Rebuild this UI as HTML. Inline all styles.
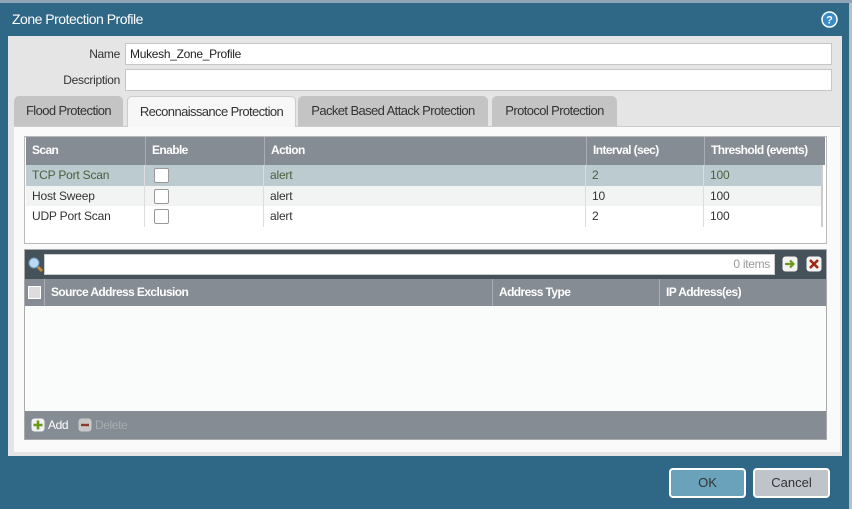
<!DOCTYPE html>
<html><head><style>
*{box-sizing:border-box;margin:0;padding:0}
body{width:852px;height:509px;background:#bdbdbd;font-family:"Liberation Sans",sans-serif;position:relative;overflow:hidden;font-size:12px}
.a{position:absolute}
.dlg{left:0;top:3px;width:849px;height:506px;background:#2f6787}
.title{left:12px;top:11px;color:#fff;font-size:14px;letter-spacing:-0.5px}
.panel{left:8px;top:36px;width:834px;height:420px;background:#e5e5e5}
.lbl{color:#333;font-size:12px;text-align:right;width:110px;left:10px;letter-spacing:-0.3px}
.inp{background:#fff;border:1px solid #c6c6c6;height:22px;left:125px;width:707px;padding:3px 4px;font-size:12px;color:#222;letter-spacing:-0.3px}
.tab{top:96px;height:30px;background:#c4c4c4;border-radius:5px 5px 0 0;font-size:13px;color:#333;text-align:center;line-height:30px;letter-spacing:-0.6px}
.tabp{left:14px;top:126px;width:826px;height:326px;background:#fafafa;border-top:1px solid #ccc}
.hdr{background:#858c93;color:#fff;font-weight:bold;font-size:12px}
.cell{top:0;height:100%;padding-left:6px;border-left:1px solid #a9aeb3;line-height:27px;letter-spacing:-0.6px}
.row{left:1px;width:797px;height:20px;line-height:20px;font-size:12px;color:#333;letter-spacing:-0.2px}
.cb{position:absolute;left:128px;top:3px;width:15px;height:15px;background:#fff;border:1px solid #999;border-radius:2px}
.btn{top:468px;width:77px;height:30px;border:2px solid #fff;border-radius:4px;text-align:center;line-height:26px;font-size:13px;color:#333}
</style></head><body>
<div class="a" style="left:0;top:0;width:852px;height:3px;background:#8fa5b5"></div>
<div class="a dlg"></div>
<div class="a title">Zone Protection Profile</div>
<svg class="a" style="left:821px;top:11px" width="17" height="17"><circle cx="8.5" cy="8.5" r="7.5" fill="#3a8cc8" stroke="#fff" stroke-width="1.5"/><text x="8.5" y="12.5" font-size="11" font-weight="bold" fill="#fff" text-anchor="middle" font-family="Liberation Sans">?</text></svg>
<div class="a panel"></div>
<div class="a lbl" style="top:47px">Name</div>
<div class="a inp" style="top:43px">Mukesh_Zone_Profile</div>
<div class="a lbl" style="top:73px">Description</div>
<div class="a inp" style="top:69px"></div>
<div class="a tab" style="left:14px;width:109px">Flood Protection</div>
<div class="a tab" style="left:127px;width:169px;background:#f7f7f7;border:1px solid #ccc;border-bottom:none;height:31px;z-index:2">Reconnaissance Protection</div>
<div class="a tab" style="left:298px;width:190px">Packet Based Attack Protection</div>
<div class="a tab" style="left:492px;width:125px">Protocol Protection</div>
<div class="a tabp"></div>
<div class="a" style="left:24px;top:136px;width:803px;height:108px;border:1px solid #bbb;background:#fff">
 <div class="a hdr" style="left:1px;top:0;width:799px;height:28px">
  <div class="a cell" style="left:0;border:none">Scan</div>
  <div class="a cell" style="left:119px">Enable</div>
  <div class="a cell" style="left:238px">Action</div>
  <div class="a cell" style="left:560px">Interval (sec)</div>
  <div class="a cell" style="left:678px">Threshold (events)</div>
 </div>
 <div class="a row" style="top:28px;background:#bccbcf;color:#4b5e3c;height:21px">
  <span class="a" style="left:6px">TCP Port Scan</span><div class="cb"></div><span class="a" style="left:244px">alert</span><span class="a" style="left:566px">2</span><span class="a" style="left:684px">100</span></div>
 <div class="a row" style="top:49px;background:#f2f4f4">
  <span class="a" style="left:6px">Host Sweep</span><div class="cb"></div><span class="a" style="left:244px">alert</span><span class="a" style="left:566px">10</span><span class="a" style="left:684px">100</span></div>
 <div class="a row" style="top:69px;background:#fff">
  <span class="a" style="left:6px">UDP Port Scan</span><div class="cb"></div><span class="a" style="left:244px">alert</span><span class="a" style="left:566px">2</span><span class="a" style="left:684px">100</span></div>
 <div class="a" style="left:119px;top:28px;width:1px;height:62px;background:#ddd"></div>
 <div class="a" style="left:238px;top:28px;width:1px;height:62px;background:#ddd"></div>
 <div class="a" style="left:560px;top:28px;width:1px;height:62px;background:#ddd"></div>
 <div class="a" style="left:678px;top:28px;width:1px;height:62px;background:#ddd"></div>
 <div class="a" style="left:796px;top:28px;width:2px;height:62px;background:#ccc"></div>
</div>
<div class="a" style="left:24px;top:249px;width:803px;height:191px;border:1px solid #aaa;background:#fafbfb">
 <div class="a" style="left:0;top:0;width:801px;height:29px;background:#46525a"></div>
 <svg class="a" style="left:3px;top:7px" width="16" height="16"><circle cx="6" cy="6" r="5" fill="#bcd8ef" stroke="#6a9cc8"/><line x1="10" y1="10" x2="14" y2="14" stroke="#c88a3a" stroke-width="3"/></svg>
 <div class="a" style="left:19px;top:4px;width:731px;height:21px;background:#fff;border:1px solid #ccc;text-align:right;padding-right:4px;line-height:19px;color:#999;letter-spacing:-0.3px">0 items</div>
 <svg class="a" style="left:757px;top:6px" width="16" height="16"><rect x="0.5" y="0.5" width="15" height="15" rx="3" fill="#f2f2f2"/><path d="M3 8h8M8 4.5l3.5 3.5L8 11.5" stroke="#6a9a1a" stroke-width="2.2" fill="none"/></svg>
 <svg class="a" style="left:781px;top:6px" width="16" height="16"><rect x="0.5" y="0.5" width="15" height="15" rx="3" fill="#f2f2f2"/><path d="M4 4l8 8M12 4l-8 8" stroke="#a02a14" stroke-width="2.6"/></svg>
 <div class="a hdr" style="left:0;top:29px;width:801px;height:27px">
  <div class="a" style="left:3px;top:7px;width:13px;height:13px;background:#ddd;border:1px solid #fff"></div>
  <div class="a cell" style="left:19px">Source Address Exclusion</div>
  <div class="a cell" style="left:467px">Address Type</div>
  <div class="a cell" style="left:634px">IP Address(es)</div>
 </div>
 <div class="a" style="left:0;top:161px;width:801px;height:28px;background:#868c93">
  <svg class="a" style="left:6px;top:7px" width="14" height="14"><rect x="0.5" y="0.5" width="13" height="13" rx="3" fill="#f2f2f2"/><path d="M7 2.5v9M2.5 7h9" stroke="#6a9a1a" stroke-width="2.6"/></svg>
  <span class="a" style="left:23px;top:7px;color:#fff;font-size:12px;letter-spacing:-0.4px">Add</span>
  <svg class="a" style="left:53px;top:7px" width="14" height="14"><rect x="0.5" y="0.5" width="13" height="13" rx="3" fill="#c8c8c8"/><path d="M3 7h8" stroke="#8a3a2a" stroke-width="2.4"/></svg>
  <span class="a" style="left:70px;top:7px;color:#a8adb2;font-size:12px;letter-spacing:-0.4px">Delete</span>
 </div>
</div>
<div class="a btn" style="left:669px;background:#6aa2bb">OK</div>
<div class="a btn" style="left:753px;background:#bfc3ca">Cancel</div>
</body></html>
